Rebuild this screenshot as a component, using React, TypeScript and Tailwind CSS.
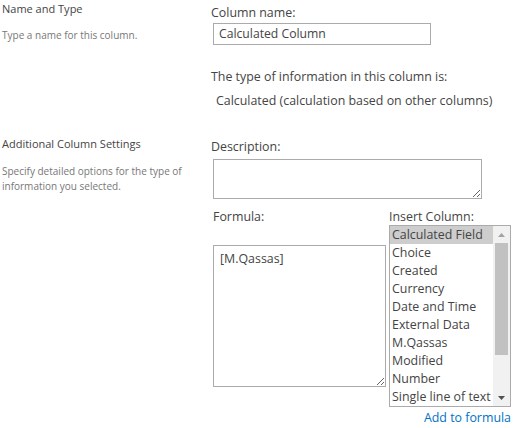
import React from "react";

const items = [
  "Calculated Field",
  "Choice",
  "Created",
  "Currency",
  "Date and Time",
  "External Data",
  "M.Qassas",
  "Modified",
  "Number",
  "Single line of text",
];

export default function App() {
  return (
    <div
      className="w-[529px] h-[428px] bg-white overflow-hidden text-[#444444]"
      style={{ fontFamily: '"Open Sans", "Noto Sans", sans-serif' }}
    >
      {/* Section 1 */}
      <div className="flex">
        <div className="w-[211px] pl-[2px] pt-[1px]">
          <div className="text-[11px] leading-[16px]">Name and Type</div>
          <div className="mt-[11px] text-[10px] leading-[15px] text-[#777777]">
            Type a name for this column.
          </div>
        </div>
        <div className="flex-1 pt-[4px] text-[12.4px] leading-[18px]">
          <div>Column name:</div>
          <div className="mt-[1px] ml-[2px] w-[218px] h-[22px] border border-[#ababab] flex items-center pl-[5px] text-[12.2px]">
            Calculated Column
          </div>
          <div className="mt-[23px]">The type of information in this column is:</div>
          <div className="mt-[6px] ml-[5px]">
            Calculated (calculation based on other columns)
          </div>
        </div>
      </div>

      {/* Section 2 */}
      <div className="flex mt-[26px]">
        <div className="w-[211px] pl-[2px]">
          <div className="text-[11px] leading-[16px]">Additional Column Settings</div>
          <div className="mt-[12px] text-[10px] leading-[15px] text-[#777777] w-[185px]">
            Specify detailed options for the type of information you selected.
          </div>
        </div>
        <div className="flex-1 pt-[2px] text-[12.4px] leading-[18px]">
          <div>Description:</div>
          <textarea
            className="block mt-[3px] ml-[2px] w-[269px] h-[40px] border border-[#ababab] outline-none"
            defaultValue=""
          />
          <div className="flex mt-[9px] ml-[2px]">
            <div className="w-[176px]">
              <div>Formula:</div>
              <textarea
                className="block mt-[19px] w-[173px] h-[142px] border border-[#ababab] outline-none text-[12.4px] leading-[18px] px-[6px] py-[4px] text-[#444444]"
                defaultValue="[M.Qassas]"
              />
            </div>
            <div className="w-[122px]">
              <div>Insert Column:</div>
              <div className="mt-[-1px] w-[122px] h-[182px] border border-[#ababab] flex">
                <div className="flex-1 flex flex-col">
                  {items.map((it, i) => (
                    <div
                      key={it}
                      className={`h-[18px] pl-[2px] leading-[18px] whitespace-nowrap overflow-hidden ${
                        i === 0 ? "bg-[#cdcdcd]" : ""
                      }`}
                    >
                      {it}
                    </div>
                  ))}
                </div>
                <div className="w-[17px] bg-[#f1f1f1] flex flex-col items-center">
                  <div className="h-[17px] flex items-center justify-center">
                    <svg width="7" height="4" viewBox="0 0 7 4">
                      <path d="M0 4 L3.5 0 L7 4 Z" fill="#a3a3a3" />
                    </svg>
                  </div>
                  <div className="w-[13px] h-[112px] bg-[#c1c1c1]" />
                  <div className="flex-1" />
                  <div className="h-[17px] flex items-center justify-center">
                    <svg width="7" height="4" viewBox="0 0 7 4">
                      <path d="M0 0 L7 0 L3.5 4 Z" fill="#505050" />
                    </svg>
                  </div>
                </div>
              </div>
              <div className="mt-[2px] text-right text-[#0072c6]">Add to formula</div>
            </div>
          </div>
        </div>
      </div>
    </div>
  );
}
